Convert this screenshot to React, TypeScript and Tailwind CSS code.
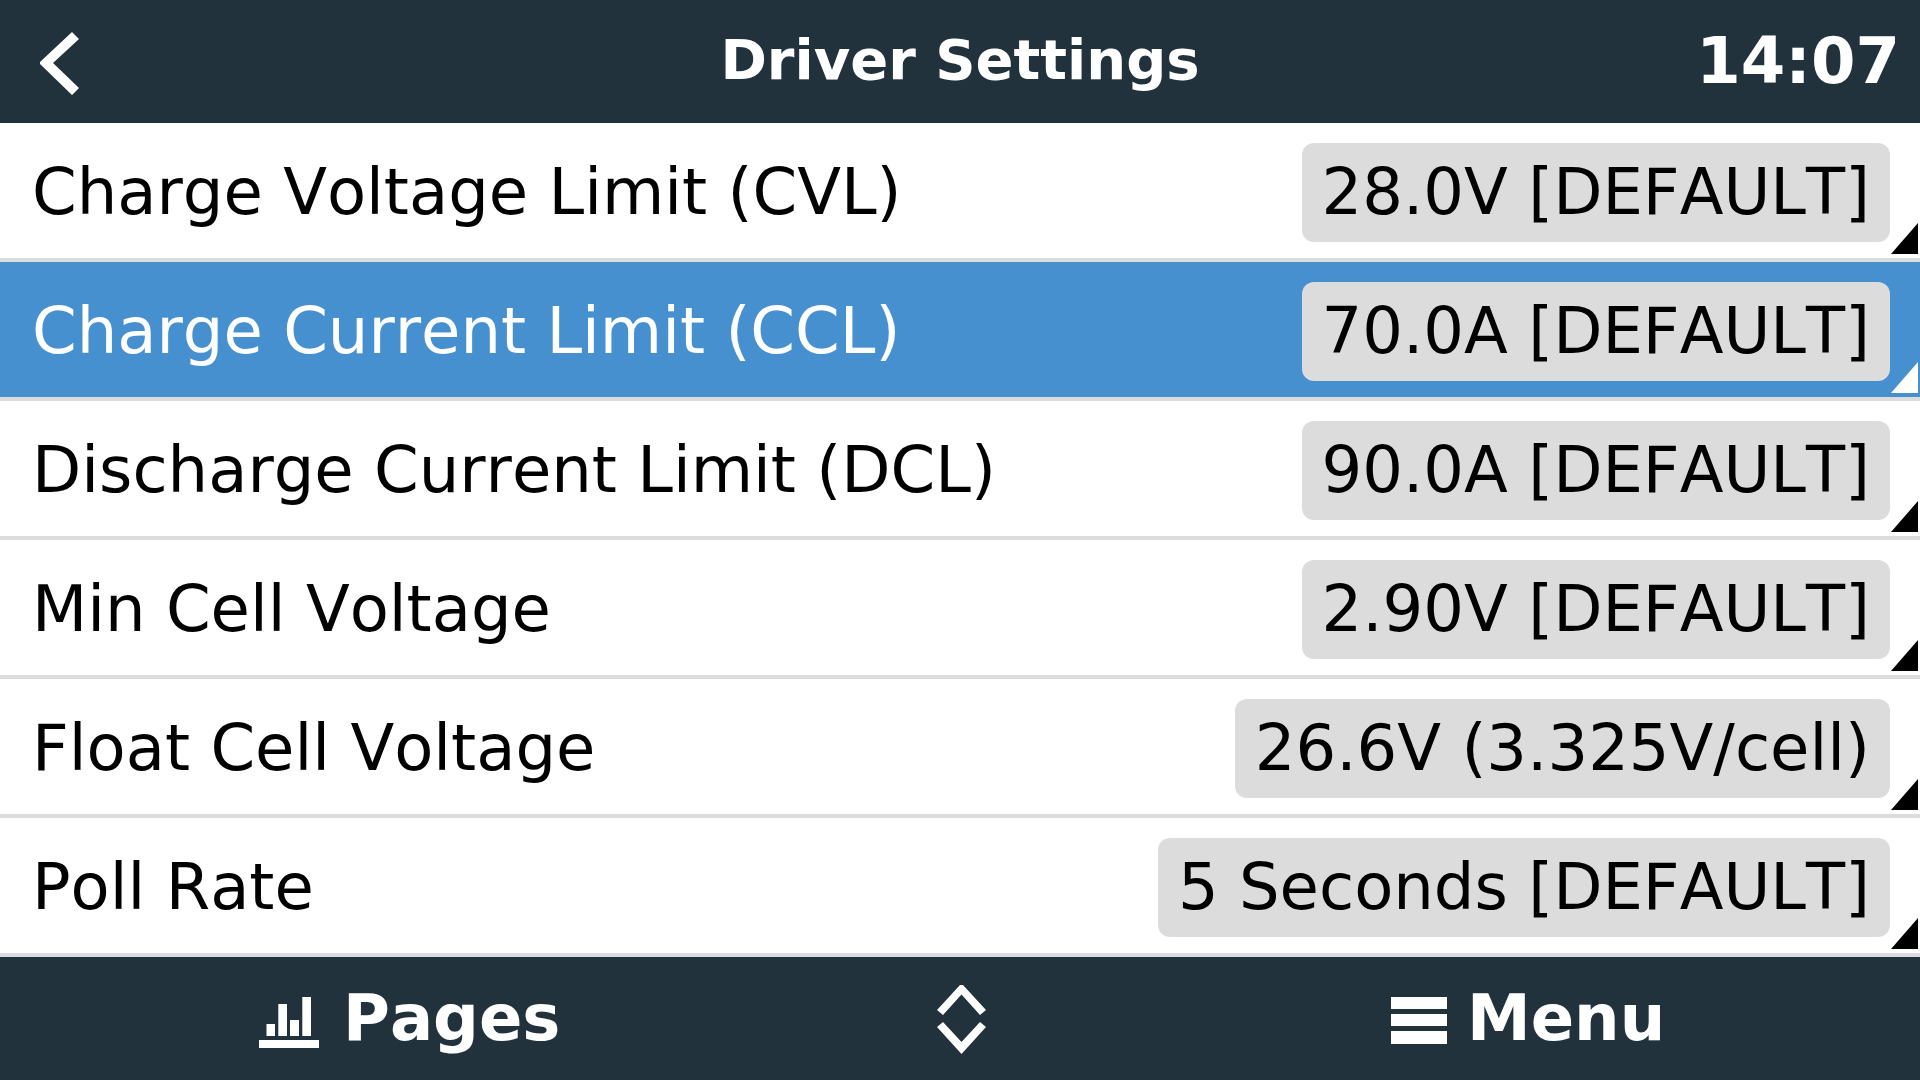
const rows = [
  { id: "cvl", label: "Charge Voltage Limit (CVL)", value: "28.0V [DEFAULT]" },
  { id: "ccl", label: "Charge Current Limit (CCL)", value: "70.0A [DEFAULT]", selected: true },
  { id: "dcl", label: "Discharge Current Limit (DCL)", value: "90.0A [DEFAULT]" },
  { id: "min", label: "Min Cell Voltage", value: "2.90V [DEFAULT]" },
  { id: "float", label: "Float Cell Voltage", value: "26.6V (3.325V/cell)" },
  { id: "poll", label: "Poll Rate", value: "5 Seconds [DEFAULT]" },
];

export default function App() {
  return (
    <div className="flex min-h-screen flex-col bg-white font-['DejaVu_Sans',sans-serif] text-black [font-kerning:none]">
      <header className="grid h-[123px] grid-cols-[1fr_auto_1fr] items-center bg-[#22323c] px-5 font-bold text-white">
        <button aria-label="Back" className="w-10 pl-5 pt-1">
          <svg viewBox="0 0 39 63" className="h-[63px] w-[39px]" fill="currentColor">
            <path d="M32 0l7 7-26 24 26 25-7 7L0 32v-2z" />
          </svg>
        </button>
        <h1 className="pb-1 text-[56px]">Driver Settings</h1>
        <time className="pb-0.5 text-right text-[64px]">14:07</time>
      </header>

      <main className="flex-1">
        <ul>
          {rows.map((row) => (
            <li key={row.id}>
              <button
                className={`relative flex h-[139px] w-full items-center justify-between border-b-4 border-[#dcdcdc] pt-1 pr-[30px] pl-8 text-[64px] leading-[76px] ${row.selected ? "bg-[#4790d0] text-white" : ""}`}
              >
                <span className="pb-0.5">{row.label}</span>
                <span className="flex h-[99px] items-center rounded-xl bg-[#dcdcdc] px-5 pb-0.5 text-black">
                  {row.value}
                </span>
                <svg viewBox="0 0 27 31" className="absolute right-0.5 bottom-1 h-[31px] w-[27px]" fill="currentColor">
                  <path d="M27 0v31H0z" />
                </svg>
              </button>
            </li>
          ))}
        </ul>
      </main>

      <footer className="grid h-[123px] grid-cols-3 items-center bg-[#22323c] text-[64px] leading-[76px] font-bold text-white">
        <button className="flex items-center gap-6 pl-[259px]">
          <svg viewBox="0 0 60 51" className="mt-2 h-[51px] w-[60px]" fill="currentColor">
            <path d="M0 43h60v8H0zM7.5 27H16v12H7.5zM19.3 7H28v32h-8.7zM31 23h9v16h-9zM43.3 0H52v39h-8.7z" />
          </svg>
          <span className="pb-0.5">Pages</span>
        </button>
        <button aria-label="Scroll" className="flex justify-center pt-0.5 pl-[3px]">
          <svg viewBox="0 0 49 69" className="h-[69px] w-[49px]" fill="currentColor">
            <path d="M23 0h3l23 25-6 5L24.5 9.5 6 30l-6-5zM0 42l6-5 18.5 20L43 37l6 5-24.5 27z" />
          </svg>
        </button>
        <button className="flex items-center gap-5 pl-[111px]">
          <svg viewBox="0 0 56 47" className="mt-1 h-[47px] w-14" fill="currentColor">
            <path d="M0 0h56v12H0zM0 17h56v12H0zM0 34h56v13H0z" />
          </svg>
          <span className="pb-0.5">Menu</span>
        </button>
      </footer>
    </div>
  );
}
